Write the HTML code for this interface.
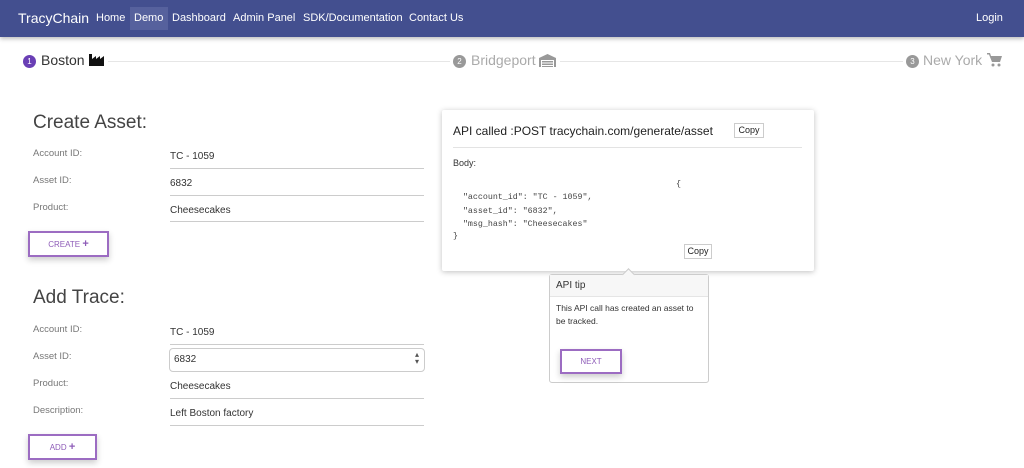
<!DOCTYPE html>
<html><head><meta charset="utf-8"><style>
*{margin:0;padding:0;box-sizing:border-box}
body{width:1024px;height:468px;background:#fff;font-family:"Liberation Sans",sans-serif;position:relative;overflow:hidden;color:#333}
.a{position:absolute;white-space:nowrap}
.nav{position:absolute;left:0;top:0;width:1024px;height:37px;background:#434f8f;box-shadow:0 2px 4px rgba(0,0,0,.25)}
.nav .a{color:#fff;font-size:11px;top:12px}
.lbl{font-size:9.5px;color:#777}
.val{font-size:10px;color:#333}
.ul{position:absolute;height:1px;background:#ccc;left:170px;width:254px}
.btn{position:absolute;border:2px solid #9c6cc2;color:#8e5cb8;font-size:8px;text-align:center;box-shadow:0 3px 6px rgba(0,0,0,.2);background:#fff}
.circ{position:absolute;width:13px;height:13px;border-radius:50%;color:#fff;font-size:8px;text-align:center;line-height:13px}
.line{position:absolute;height:1px;background:#e6e6e6;top:61px}
.mono{font-family:"Liberation Mono",monospace;font-size:8.3px;color:#444}
.cp{position:absolute;border:1px solid #ccc;font-size:9px;text-align:center;background:#fff;color:#222}
h1{position:absolute;font-weight:normal;font-size:19px;color:#444;white-space:nowrap}
</style></head><body>
<div class="nav">
<div class="a" style="left:18px;top:10px;font-size:14px">TracyChain</div>
<div style="position:absolute;left:130px;top:7px;width:38px;height:23px;background:#56619d"></div>
<div class="a" style="left:96px">Home</div>
<div class="a" style="left:134px">Demo</div>
<div class="a" style="left:172px">Dashboard</div>
<div class="a" style="left:233px">Admin Panel</div>
<div class="a" style="left:303px">SDK/Documentation</div>
<div class="a" style="left:409px">Contact Us</div>
<div class="a" style="left:976px">Login</div>
</div>

<div class="circ" style="left:23px;top:55px;background:#6a3fb5">1</div>
<div class="a" style="left:41px;top:52px;font-size:14px;color:#333">Boston</div>
<svg class="a" style="left:89px;top:54px" width="16" height="12" viewBox="0 0 16 12"><path d="M0 0h3v5l4-3v3l4-3v3l4-3v10H0z" fill="#111"/></svg>
<div class="line" style="left:108px;width:342px"></div>
<div class="circ" style="left:453px;top:55px;background:#999">2</div>
<div class="a" style="left:471px;top:52px;font-size:14px;color:#aaa">Bridgeport</div>
<svg class="a" style="left:539px;top:54px" width="17" height="13" viewBox="0 0 17 13"><path d="M0 4L8.5 0 17 4v9h-2V6H2v7H0z M3 7h11v1.5H3z M3 9.5h11V11H3z M3 12h11v1H3z" fill="#999"/></svg>
<div class="line" style="left:560px;width:343px"></div>
<div class="circ" style="left:906px;top:55px;background:#999">3</div>
<div class="a" style="left:923px;top:52px;font-size:14px;color:#aaa">New York</div>
<svg class="a" style="left:987px;top:53px" width="15" height="14" viewBox="0 0 15 14"><path d="M0 0h3l1 3h11l-2 6H5L2 1.5H0z" fill="#999"/><circle cx="6" cy="12" r="1.5" fill="#999"/><circle cx="12" cy="12" r="1.5" fill="#999"/></svg>

<h1 style="left:33px;top:112px">Create Asset:</h1>
<div class="a lbl" style="left:33px;top:148px">Account ID:</div>
<div class="a lbl" style="left:33px;top:175px">Asset ID:</div>
<div class="a lbl" style="left:33px;top:202px">Product:</div>
<div class="a val" style="left:170px;top:151px">TC - 1059</div>
<div class="ul" style="top:168px"></div>
<div class="a val" style="left:170px;top:178px">6832</div>
<div class="ul" style="top:195px"></div>
<div class="a val" style="left:170px;top:205px">Cheesecakes</div>
<div class="ul" style="top:221px"></div>
<div class="btn" style="left:28px;top:231px;width:81px;height:26px;line-height:22px">CREATE <b style="font-size:11px">+</b></div>

<h1 style="left:33px;top:287px">Add Trace:</h1>
<div class="a lbl" style="left:33px;top:324px">Account ID:</div>
<div class="a lbl" style="left:33px;top:351px">Asset ID:</div>
<div class="a lbl" style="left:33px;top:378px">Product:</div>
<div class="a lbl" style="left:33px;top:405px">Description:</div>
<div class="a val" style="left:170px;top:327px">TC - 1059</div>
<div class="ul" style="top:344px"></div>
<div style="position:absolute;left:169px;top:348px;width:256px;height:24px;border:1px solid #ccc;border-radius:4px"></div>
<div class="a val" style="left:174px;top:354px">6832</div>
<div class="a" style="left:415px;top:351px;font-size:8px;color:#555;line-height:7px">▴<br>▾</div>
<div class="a val" style="left:170px;top:381px">Cheesecakes</div>
<div class="ul" style="top:398px"></div>
<div class="a val" style="left:170px;top:408px">Left Boston factory</div>
<div class="ul" style="top:425px"></div>
<div class="btn" style="left:28px;top:434px;width:69px;height:26px;line-height:22px">ADD <b style="font-size:11px">+</b></div>

<div style="position:absolute;left:442px;top:110px;width:372px;height:161px;background:#fff;box-shadow:0 1px 6px rgba(0,0,0,.25);border-radius:2px"></div>
<div class="a" style="left:453px;top:124px;font-size:12px;color:#222">API called :POST tracychain.com/generate/asset</div>
<div class="cp" style="left:734px;top:123px;width:30px;height:15px;line-height:13px">Copy</div>
<div style="position:absolute;left:453px;top:147px;width:349px;height:1px;background:#e3e3e3"></div>
<div class="a" style="left:453px;top:158px;font-size:9px;color:#333">Body:</div>
<div class="a mono" style="left:676px;top:180px">{</div>
<div class="a mono" style="left:453px;top:193px">&nbsp;&nbsp;"account_id": "TC - 1059",</div>
<div class="a mono" style="left:453px;top:207px">&nbsp;&nbsp;"asset_id": "6832",</div>
<div class="a mono" style="left:453px;top:220px">&nbsp;&nbsp;"msg_hash": "Cheesecakes"</div>
<div class="a mono" style="left:453px;top:232px">}</div>
<div class="cp" style="left:684px;top:244px;width:28px;height:15px;line-height:13px">Copy</div>

<div style="position:absolute;left:549px;top:274px;width:160px;height:109px;background:#fff;border:1px solid #ccc;border-radius:3px"></div>
<div style="position:absolute;left:550px;top:275px;width:158px;height:22px;background:#f7f7f7;border-bottom:1px solid #e5e5e5"></div>
<div style="position:absolute;left:624px;top:270px;width:9px;height:9px;background:#f7f7f7;border-left:1px solid #ccc;border-top:1px solid #ccc;transform:rotate(45deg)"></div>
<div class="a" style="left:556px;top:280px;font-size:10px;color:#333">API tip</div>
<div class="a" style="left:556px;top:302px;font-size:8.5px;color:#333;line-height:12.5px">This API call has created an asset to<br>be tracked.</div>
<div class="btn" style="left:560px;top:349px;width:62px;height:25px;line-height:21px">NEXT</div>
</body></html>
